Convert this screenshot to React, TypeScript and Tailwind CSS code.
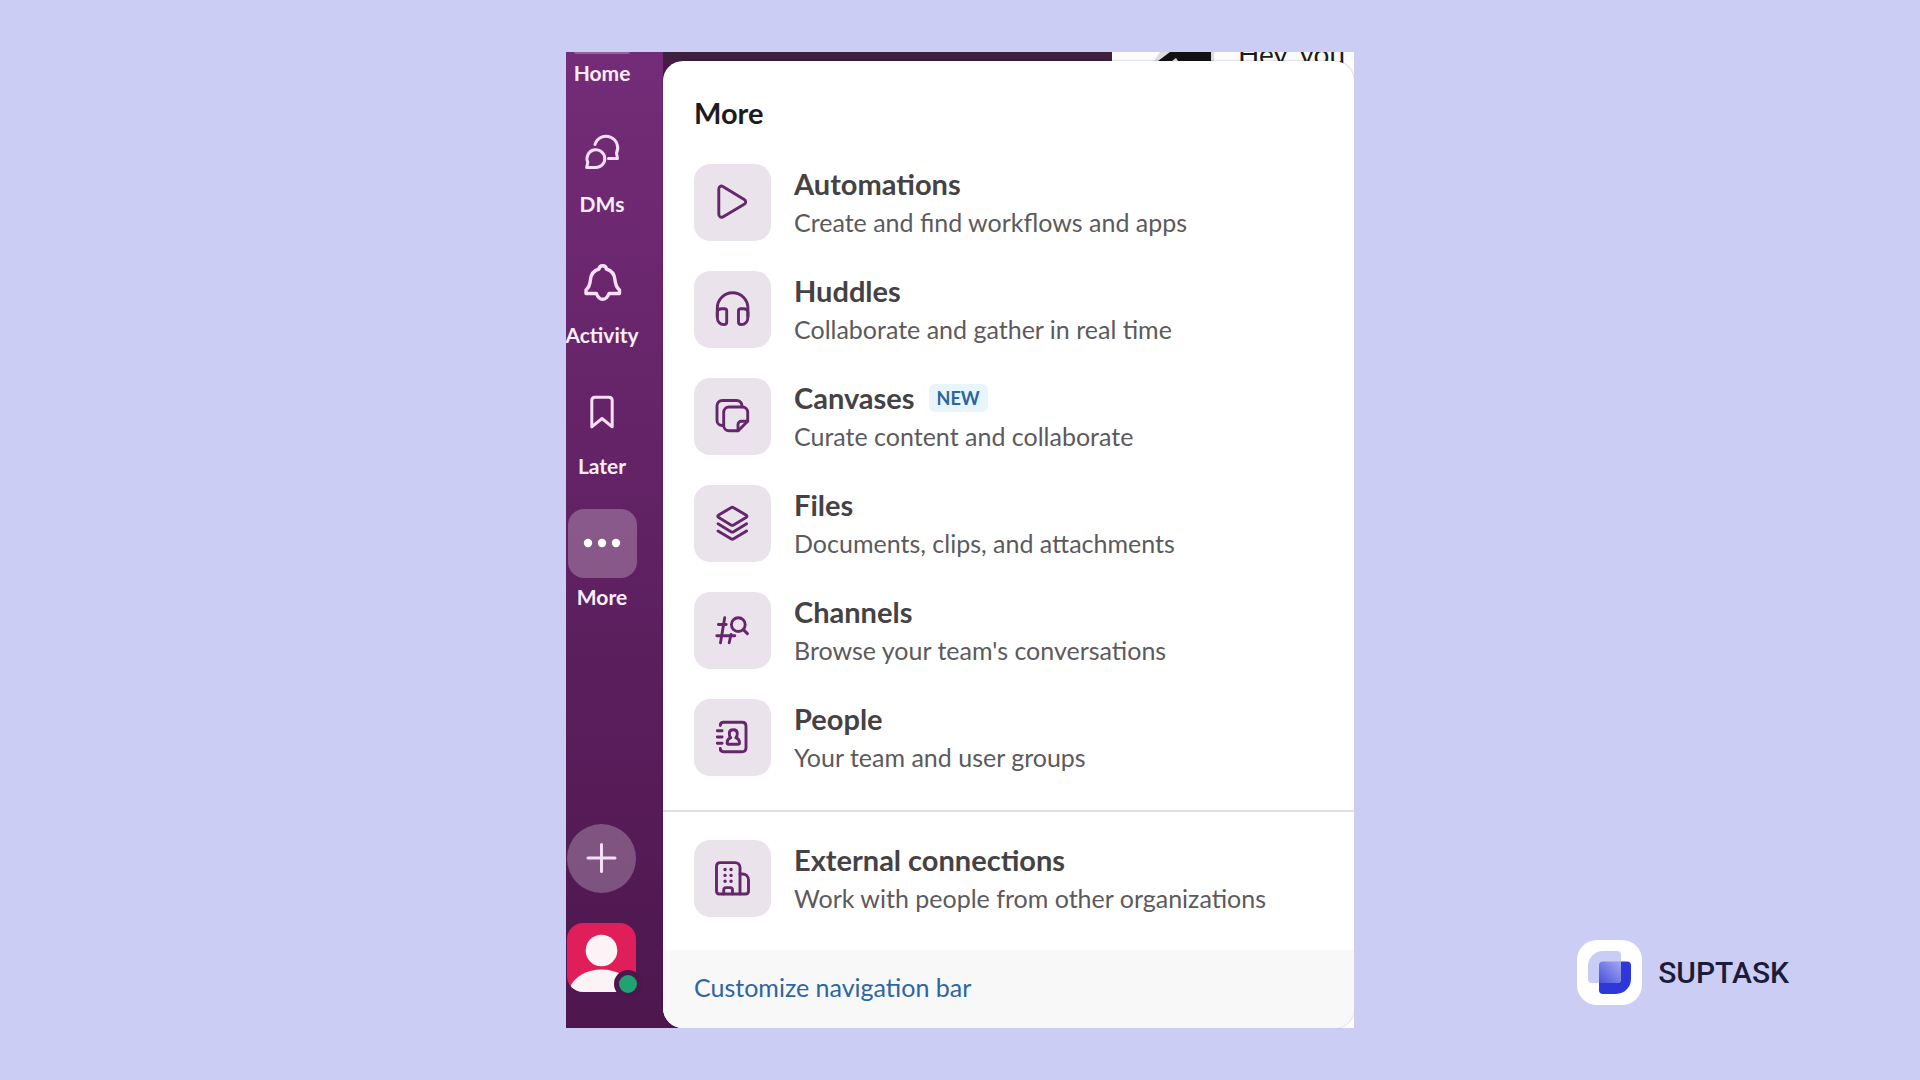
import type { ReactNode } from "react";

type Item = {
  title: string;
  text: string;
  icon: ReactNode;
  isNew?: boolean;
};

// every menu icon is drawn on the same 77px tile
function TileIcon({ children }: { children: ReactNode }) {
  return (
    <svg
      viewBox="0 0 77 77"
      className="size-[77px] shrink-0 rounded-2xl bg-[#ebe3eb]"
      fill="none"
      stroke="#65276b"
      strokeWidth="2.9"
      strokeLinecap="round"
      strokeLinejoin="round"
      aria-hidden="true"
    >
      {children}
    </svg>
  );
}

function NavIcon({ children }: { children: ReactNode }) {
  return (
    <svg
      viewBox="0 0 69 69"
      className="size-[69px]"
      fill="none"
      stroke="#f6dff7"
      strokeWidth="3"
      strokeLinecap="round"
      strokeLinejoin="round"
      aria-hidden="true"
    >
      {children}
    </svg>
  );
}

const items: Item[] = [
  {
    title: "Automations",
    text: "Create and find workflows and apps",
    icon: <path d="M24.800 24.900v25.400c0 2.400 2 3.600 4 2.600l21.400-12.600c2-1.200 2-3.600 0-4.800L28.800 22.500c-2-1.100-4 0-4 2.400z" />,
  },
  {
    title: "Huddles",
    text: "Collaborate and gather in real time",
    icon: (
      <>
        <path d="M23.3 45.5V37a15.300 15.300 0 0 1 30.600 0v8.500" />
        <path d="M23.3 41.5c0-2.700 2-3.700 4.700-3.700h2.500c1.500 0 2.200.7 2.200 2.200v11c0 1.700-.9 2.600-2.600 2.600-4.300 0-6.800-3-6.800-7.600z" />
        <path d="M53.9 41.5c0-2.700-2-3.700-4.700-3.700h-2.500c-1.500 0-2.200.7-2.200 2.200v11c0 1.700.9 2.600 2.600 2.600 4.300 0 6.800-3 6.800-7.600z" />
      </>
    ),
  },
  {
    title: "Canvases",
    text: "Curate content and collaborate",
    isNew: true,
    icon: (
      <>
        <path d="M29 47.500h-.700a5.300 5.300 0 0 1-5.300-5.300V27.800a5.300 5.300 0 0 1 5.300-5.300h14.400a5.300 5.300 0 0 1 5.300 5.300v1" />
        <path d="M35 29h13.400a5.300 5.300 0 0 1 5.300 5.300v9L44.200 52.800H35a5.300 5.300 0 0 1-5.300-5.300V34.300A5.300 5.300 0 0 1 35 29z" />
        <path d="M53.700 43.200h-6.400a3.300 3.300 0 0 0-3.300 3.300v6.300" />
      </>
    ),
  },
  {
    title: "Files",
    text: "Documents, clips, and attachments",
    icon: (
      <>
        <path d="M37 22.700 24.700 30q-2 1.300 0 2.600L37 40q1.300.8 2.600 0L52 32.600q2-1.300 0-2.600l-12.400-7.300q-1.300-.8-2.600 0z" />
        <path d="m24 38.800 13 7.900q1.300.8 2.600 0l13-7.900" />
        <path d="m24 45.900 13 7.900q1.300.8 2.600 0l13-7.900" />
      </>
    ),
  },
  {
    title: "Channels",
    text: "Browse your team's conversations",
    icon: (
      <>
        <path d="m30.700 25.800-4.200 25M37 42.500l-1.800 8.300M24.400 32.500h7.800M22.800 43.700h18" />
        <circle cx="44.3" cy="32.600" r="6.900" />
        <path d="m49.400 37.600 4 4" />
      </>
    ),
  },
  {
    title: "People",
    text: "Your team and user groups",
    icon: (
      <>
        <path d="M26.300 26.500c0-2 1.200-3.200 3.200-3.200H48c2.500 0 4 1.500 4 4v21.400c0 2.500-1.500 4-4 4H29.500c-2 0-3.200-1.200-3.200-3.200" />
        <path d="M23.300 31.700h4.800M23.300 38h4.800M23.300 44.200h4.800" />
        <path d="M36.800 38.700c-1-1-1.500-2.400-1.500-4 0-2.400 1.600-4 4-4s4 1.600 4 4c0 1.600-.5 3-1.500 4 2.300.8 3.700 2.500 3.700 5 0 1-.5 1.500-1.500 1.500h-9.400c-1 0-1.500-.5-1.500-1.500 0-2.500 1.400-4.200 3.700-5z" />
      </>
    ),
  },
];

const external: Item = {
  title: "External connections",
  text: "Work with people from other organizations",
  icon: (
    <>
      <path d="M46 54H25.500c-2 0-3-1-3-3V26.500c0-2.500 1.500-3.900 4-3.900H41c3 0 5 2 5 5z" />
      <path d="M46 34h2.500c3.500 0 6 2.500 6 6v11c0 2-1 3-3 3H46" />
      <path d="M29.700 54v-4c0-1.500 1-2.400 2.400-2.400h4c1.500 0 2.400 1 2.400 2.400v4" />
      <path d="M31 29.500h.1M37 29.500h.1M31 35.400h.1M37 35.400h.1M31 41.300h.1M37 41.300h.1" strokeWidth="3.400" />
    </>
  ),
};

const navItems = [
  {
    label: "DMs",
    icon: (
      <>
        <path d="M27 28.500A11.600 11.600 0 1 1 48.500 37l1 5.500h-9" />
        <path d="M19.800 46.300a8.900 8.900 0 1 1 7.900 5.200h-9z" />
      </>
    ),
  },
  {
    label: "Activity",
    icon: (
      <path
        d="M31 22c.2-2 1.500-3.200 3.700-3.200s3.500 1.200 3.700 3.200c5 1.500 8 5.300 8.500 10.500.4 4.500 1.100 7.500 4.600 10.500v3.500h-10.500c-1.500 4-3.600 5.800-6.300 5.800s-4.800-1.800-6.300-5.800H18V43c3.500-3 4.100-6 4.500-10.500.5-5.200 3.500-9 8.500-10.500z"
        strokeWidth="3.400"
      />
    ),
  },
  {
    label: "Later",
    icon: <path d="M23.800 48.800V22.600c0-2.200 1.100-3.300 3.300-3.300h13.800c2.200 0 3.300 1.100 3.300 3.300v26.200L34 40.500z" />,
  },
  {
    label: "More",
    active: true,
    icon: (
      <g fill="#fff" stroke="none">
        <circle cx="20" cy="34" r="4.200" />
        <circle cx="34" cy="34" r="4.200" />
        <circle cx="48" cy="34" r="4.200" />
      </g>
    ),
  },
];

function MenuItem({ item }: { item: Item }) {
  return (
    <button type="button" className="flex w-full items-center gap-[23px] text-left">
      <TileIcon>{item.icon}</TileIcon>
      <span className="flex flex-col">
        <span className="flex items-center gap-[14px] text-[29px] leading-[38px] font-bold text-[#454245]">
          {item.title}
          {item.isNew && (
            <span className="rounded-md bg-[#e8f5fa] px-2 text-[18px] leading-7 text-[#2c65a3]">NEW</span>
          )}
        </span>
        <span className="text-[25px] leading-[38px] text-[#5c5a5c]">{item.text}</span>
      </span>
    </button>
  );
}

function Sidebar() {
  return (
    <nav className="flex w-[97px] shrink-0 flex-col items-start gap-6 bg-linear-to-b from-[#742c78] to-[#4d174e] px-px pb-9">
      {/* Home is scrolled up, only the bottom edge of its tile is left */}
      <button type="button" className="flex w-[70px] flex-col items-center text-[21px] leading-[38px] font-bold text-[#fbeffc]">
        <span className="h-[2px] w-14 rounded-b-full bg-white/25" />
        Home
      </button>
      {navItems.map((n) => (
        <button
          key={n.label}
          type="button"
          className="flex w-[70px] flex-col items-center text-[21px] leading-[38px] font-bold whitespace-nowrap text-[#fbeffc]"
        >
          <span className={n.active ? "rounded-2xl bg-white/25" : "rounded-2xl"}>
            <NavIcon>{n.icon}</NavIcon>
          </span>
          {n.label}
        </button>
      ))}

      <div className="mt-auto flex flex-col gap-[30px]">
        <button type="button" aria-label="Create new" className="rounded-full bg-white/25">
          <NavIcon>
            <path d="M34.500 20.500v27M21 34h27" />
          </NavIcon>
        </button>
        <button type="button" aria-label="Profile" className="relative">
          <svg viewBox="0 0 69 69" className="size-[69px] rounded-2xl bg-[#e01e5a]" aria-hidden="true">
            <circle cx="34.500" cy="27.500" r="15.800" fill="#fbf3f6" />
            <path d="M3 64c5-11 17-17.500 31.500-17.500S61 53 66 64v5H7z" fill="#fbf3f6" />
          </svg>
          <span className="absolute -right-1.5 -bottom-1.5 size-7 rounded-full border-[5px] border-[#4d174e] bg-[#20a271]" />
        </button>
      </div>
    </nav>
  );
}

function MorePanel() {
  return (
    <section className="relative flex flex-col overflow-hidden rounded-[20px] bg-white shadow-[0_0_2px_rgba(0,0,0,0.35)]">
      <div className="px-[31px] pt-[34px] pb-[34px]">
        <h1 className="mb-[33px] text-[29px] leading-9 font-bold text-[#1d1c1d]">More</h1>
        <div className="flex flex-col gap-[30px]">
          {items.map((item) => (
            <MenuItem key={item.title} item={item} />
          ))}
        </div>
      </div>
      <div className="border-t-2 border-[#e0e0e0] px-[31px] pt-7 pb-[33px]">
        <MenuItem item={external} />
      </div>
      <footer className="bg-[#f8f8f8] px-[31px] pt-[18px] pb-[22px]">
        <a href="#" className="block text-[25px] leading-[38px] text-[#2c65a3]">
          Customize navigation bar
        </a>
      </footer>
    </section>
  );
}

function Logo() {
  return (
    <div className="flex items-center gap-4">
      <svg viewBox="0 0 65 65" className="size-[65px]" aria-hidden="true">
        <defs>
          <linearGradient id="overlap" x1="0" y1="1" x2="1" y2="0">
            <stop offset="0" stopColor="#4a51dc" />
            <stop offset="1" stopColor="#a3a9f0" />
          </linearGradient>
        </defs>
        <rect width="65" height="65" rx="20" fill="#fff" />
        <path d="M26 21.500h24a4 4 0 0 1 4 4V39a15 15 0 0 1-15 15H26a4 4 0 0 1-4-4V25.500a4 4 0 0 1 4-4z" fill="#2e38da" />
        <path d="M26 11h14a4 4 0 0 1 4 4v24a4 4 0 0 1-4 4H15a4 4 0 0 1-4-4V26a15 15 0 0 1 15-15z" fill="#c9ccf5" />
        <path d="M26 21.500h18V39a4 4 0 0 1-4 4H22V25.500a4 4 0 0 1 4-4z" fill="url(#overlap)" />
      </svg>
      <span className="font-[Roboto,sans-serif] text-[30px] leading-9 font-medium text-[#1b1b3a]">SUPTASK</span>
    </div>
  );
}

export default function App() {
  return (
    <main className="grid min-h-screen grid-cols-[1fr_minmax(0,788px)_1fr] items-center bg-[#cbcdf5] font-[Lato,sans-serif]">
      <div className="col-start-2 flex overflow-hidden">
        <Sidebar />
        {/* dark workspace behind the left corners of the menu, white messages behind the right ones */}
        <div className="min-w-0 flex-1 bg-linear-to-r from-[#4d174e] from-50% to-white to-50%">
          <div className="flex h-[9px] justify-end bg-[#40203f]">
            <div className="flex w-[242px] items-end gap-6 bg-[#fcfcfc] pr-2 pl-[42px]">
              <svg viewBox="0 0 60 9" className="h-[9px] w-[60px] shrink-0" aria-hidden="true">
                <path d="M0 9 6 0h54v9z" fill="#ddd" />
                <path d="M4 9 16 0h41v9H24l-2-3-4 3z" fill="#111" />
              </svg>
              <span className="text-[28px] leading-[14px] whitespace-nowrap text-[#1d1c1d]">Hey, you</span>
            </div>
          </div>
          <MorePanel />
        </div>
      </div>
      <div className="mr-[131px] mb-[75px] self-end justify-self-end">
        <Logo />
      </div>
    </main>
  );
}
